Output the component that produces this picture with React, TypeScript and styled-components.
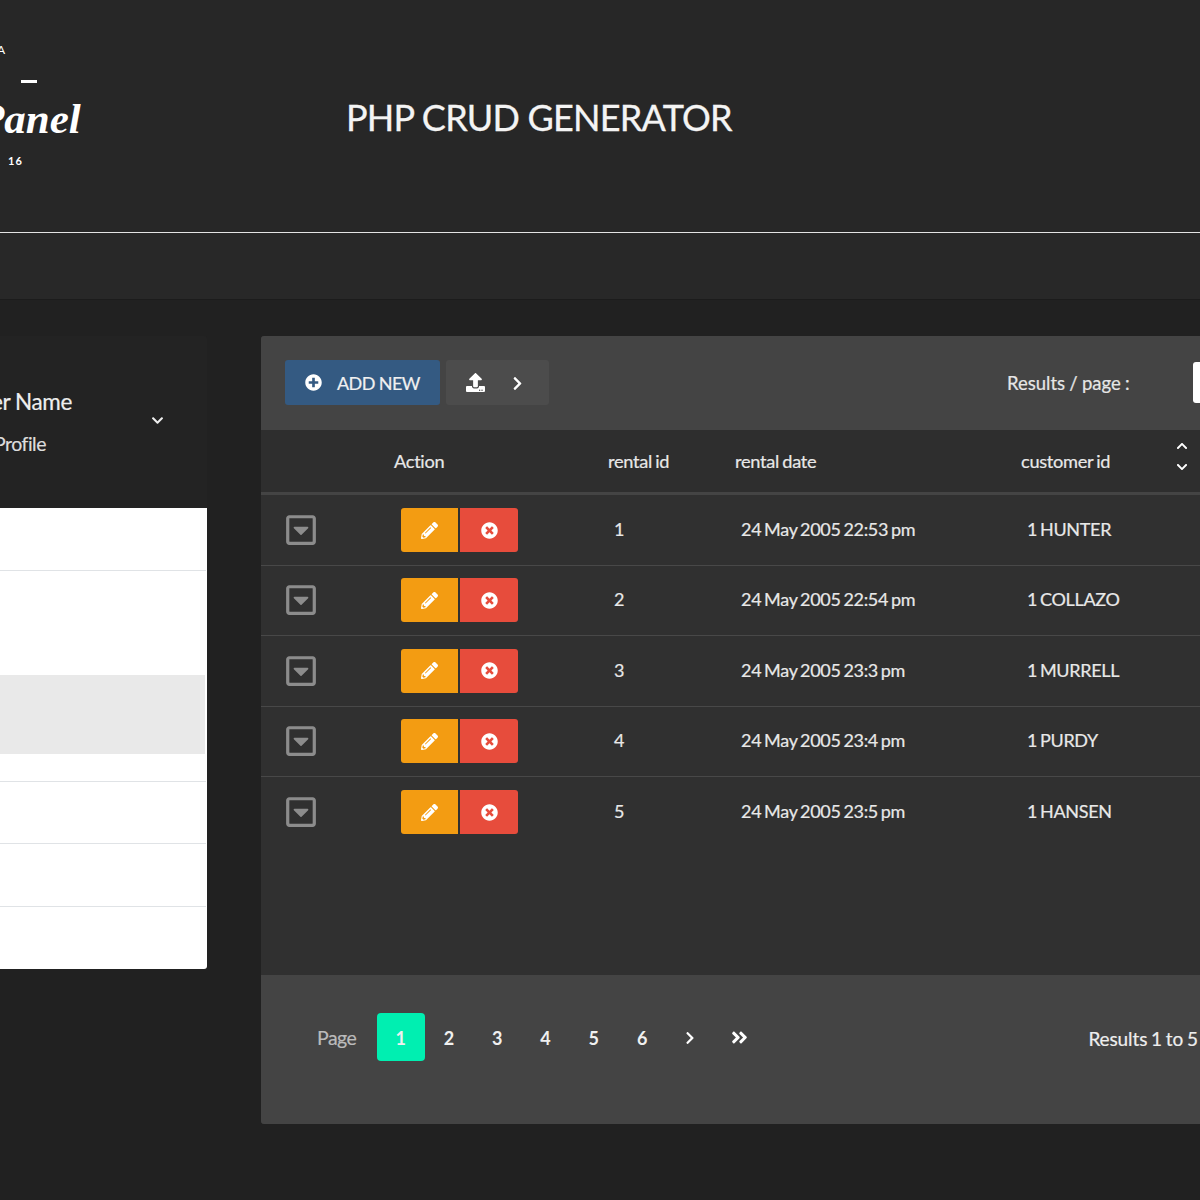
import styled, { createGlobalStyle } from 'styled-components';
import {
  FaAngleDoubleRight,
  FaChevronDown,
  FaChevronRight,
  FaChevronUp,
  FaPencilAlt,
  FaPlusCircle,
  FaRegCaretSquareDown,
  FaTimesCircle,
  FaUpload,
} from 'react-icons/fa';

const GlobalStyle = createGlobalStyle`
  html, body {
    margin: 0;
    padding: 0;
    background: #212121;
  }
  body {
    font-family: Lato, "Open Sans", sans-serif;
    color: #eee;
  }
`;

const Page = styled.div`
  width: 1200px;
  height: 1200px;
  overflow: hidden;
  background: #212121;
`;

const Header = styled.header`
  height: 232px;
  background: #272727;
  border-bottom: 1px solid #e4e4e4;
  display: flex;
`;

const Logo = styled.div`
  width: 346px;
  flex-shrink: 0;
  padding-top: 42px;
  box-sizing: border-box;
  overflow: hidden;
  color: #fff;
`;

const LogoTop = styled.div`
  font-size: 12px;
  line-height: 16px;
  margin-left: -3px;
`;

const LogoDash = styled.div`
  width: 16px;
  height: 3px;
  margin: 22px 0 0 21px;
  background: #fff;
`;

const LogoScript = styled.div`
  font-family: "Liberation Serif", serif;
  font-style: italic;
  font-weight: 700;
  font-size: 43px;
  line-height: 50px;
  margin: 11px 0 0 -22px;
`;

const LogoYear = styled.div`
  font-size: 11px;
  font-weight: 700;
  line-height: 14px;
  margin: 10px 0 0 8px;
  letter-spacing: 1px;
`;

const Title = styled.h1`
  margin: 95px 0 0;
  font-size: 36px;
  line-height: 44px;
  height: 44px;
  font-weight: 400;
  letter-spacing: -0.77px;
  color: #f4f4f4;
  white-space: nowrap;
  -webkit-text-stroke: 0.3px #f4f4f4;
`;

const NavBar = styled.nav`
  height: 66px;
  background: #282828;
  border-bottom: 1px solid #1c1c1c;
`;

const Body = styled.div`
  display: flex;
  align-items: flex-start;
  gap: 54px;
  padding-top: 36px;
`;

const Sidebar = styled.aside`
  width: 207px;
  flex-shrink: 0;
  overflow: hidden;
  border-radius: 0 3px 3px 0;
`;

const UserBox = styled.div`
  height: 172px;
  background: #232323;
  position: relative;
  overflow: hidden;
  box-sizing: border-box;
  padding-top: 52px;
`;

const UserName = styled.div`
  font-size: 22.5px;
  line-height: 28px;
  letter-spacing: -0.4px;
  color: #eee;
  margin-left: -34px;
  white-space: nowrap;
  -webkit-text-stroke: 0.2px #eee;
`;

const UserProfile = styled.div`
  font-size: 19.5px;
  line-height: 24px;
  letter-spacing: -0.5px;
  color: #ddd;
  margin: 16px 0 0 -6px;
  white-space: nowrap;
  -webkit-text-stroke: 0.2px #ddd;
`;

const UserCaret = styled.span`
  position: absolute;
  left: 151px;
  top: 78px;
  font-size: 13px;
  line-height: 13px;
  color: #eee;
`;

const Menu = styled.ul`
  list-style: none;
  margin: 0;
  padding: 0;
  background: #fff;
  height: 461px;
  box-sizing: border-box;
  padding-right: 1px;
`;

const MenuItem = styled.li<{ $height: number }>`
  height: ${props => props.$height}px;
  box-sizing: border-box;
  border-bottom: 1px solid #e0e3e6;
  padding-top: ${props => (props.$height > 100 ? 104 : 0)}px;

  &:last-child {
    border-bottom: none;
  }
`;

const ActiveItem = styled.div`
  height: 79px;
  margin-right: 1px;
  background: #e9e9e9;
`;

const Panel = styled.section`
  width: 1100px;
  flex-shrink: 0;
  border-radius: 3px;
  overflow: hidden;
  background: #303030;
`;

const Toolbar = styled.div`
  height: 94px;
  background: #444;
  display: flex;
  align-items: center;
  padding: 0 24px;
  box-sizing: border-box;
`;

const AddButton = styled.button`
  width: 155px;
  height: 45px;
  border: none;
  border-radius: 3px;
  background: #345a82;
  color: #f0f0f0;
  font: 400 18px Lato, sans-serif;
  letter-spacing: -0.6px;
  -webkit-text-stroke: 0.2px #f0f0f0;
  display: flex;
  align-items: center;
  gap: 15px;
  padding: 0 0 0 20px;
  margin-top: -1px;

  svg {
    font-size: 17px;
    color: #fff;
  }
`;

const ExportButton = styled.button`
  width: 103px;
  height: 45px;
  margin: -1px 0 0 6px;
  border: none;
  border-radius: 3px;
  background: #4c4c4c;
  color: #fff;
  display: flex;
  align-items: center;
  gap: 25px;
  padding: 0 0 0 20px;

  svg:first-child {
    font-size: 19px;
  }
  svg:last-child {
    font-size: 15px;
    margin-top: 1px;
  }
`;

const PerPage = styled.div`
  margin-left: 458px;
  font-size: 18.5px;
  word-spacing: -0.5px;
  color: #e6e6e6;
  white-space: nowrap;
  -webkit-text-stroke: 0.2px #e6e6e6;
`;

const PerPageSelect = styled.div`
  width: 80px;
  height: 41px;
  margin: -2px 0 0 63px;
  border-radius: 3px;
  background: #fff;
`;

const rowColumns = '125px 214px 127px 286px 1fr';

const HeadRow = styled.div`
  height: 65.4px;
  display: grid;
  grid-template-columns: ${rowColumns};
  align-items: center;
  background: #2e2e2e;
  border-bottom: 3px solid #444;
  box-sizing: border-box;
`;

const HeadCell = styled.div`
  padding: 0 0 1px 8px;
  font-size: 18.2px;
  letter-spacing: -0.3px;
  word-spacing: -1px;
  color: #e8e8e8;
  white-space: nowrap;
  position: relative;
  -webkit-text-stroke: 0.2px #e8e8e8;
`;

const SortIcons = styled.span`
  position: absolute;
  left: 163px;
  top: -10px;
  display: flex;
  flex-direction: column;
  gap: 9px;
  font-size: 12px;
  line-height: 12px;
  color: #fff;
  -webkit-text-stroke: 0;
`;

const Rows = styled.div`
  height: 479.6px;
`;

const Row = styled.div`
  height: 70.4px;
  display: grid;
  grid-template-columns: ${rowColumns};
  align-items: center;
  border-bottom: 1px solid #484848;
  box-sizing: border-box;
  font-size: 18px;
  letter-spacing: -0.3px;
  word-spacing: -1.5px;
  color: #e8e8e8;

  &:last-child {
    border-bottom: none;
  }
`;

const ExpandCell = styled.div`
  padding-left: 23px;
  font-size: 34px;
  line-height: 0;
  color: #8c8c8c;
  display: flex;
`;

const ActionCell = styled.div`
  padding-left: 15px;
  display: flex;
  gap: 2px;
`;

const RowButton = styled.button<{ $color: string; $width: number }>`
  width: ${props => props.$width}px;
  height: 44px;
  border: none;
  padding: 0;
  background: ${props => props.$color};
  color: #fff;
  font-size: 17px;
  display: flex;
  align-items: center;
  justify-content: center;

  &:first-child {
    border-radius: 3px 0 0 3px;
  }
  &:last-child {
    border-radius: 0 3px 3px 0;
  }
`;

const DataCell = styled.div`
  padding: 0 0 2px 14px;
  white-space: nowrap;
  -webkit-text-stroke: 0.2px #e8e8e8;
`;

const Footer = styled.div`
  height: 149px;
  background: #444;
  box-sizing: border-box;
  padding: 38px 0 0 56px;
  display: flex;
  align-items: flex-start;
`;

const PageLabel = styled.span`
  width: 60px;
  line-height: 50px;
  font-size: 19.5px;
  letter-spacing: -0.5px;
  color: #bbb;
  -webkit-text-stroke: 0.2px #bbb;
`;

const PageLink = styled.a<{ $active?: boolean }>`
  width: 48.3px;
  height: 48px;
  border-radius: 4px;
  display: flex;
  align-items: center;
  justify-content: center;
  padding: 2px 1px 0 0;
  box-sizing: border-box;
  font-size: 18px;
  font-weight: 700;
  color: #f0f0f0;
  background: ${props => (props.$active ? '#00efb1' : 'transparent')};
`;

const PageArrow = styled(PageLink)`
  font-size: 14px;
  color: #fff;
`;

const PageLast = styled(PageLink)`
  font-size: 19px;
  margin-left: 1px;
  color: #fff;
`;

const ResultsText = styled.span`
  margin-left: 324px;
  line-height: 52px;
  font-size: 19px;
  letter-spacing: -0.1px;
  word-spacing: -1px;
  color: #eee;
  white-space: nowrap;
  -webkit-text-stroke: 0.2px #eee;
`;

const rentals = [
  { id: 1, date: '24 May 2005 22:53 pm', customer: '1 HUNTER' },
  { id: 2, date: '24 May 2005 22:54 pm', customer: '1 COLLAZO' },
  { id: 3, date: '24 May 2005 23:3 pm', customer: '1 MURRELL' },
  { id: 4, date: '24 May 2005 23:4 pm', customer: '1 PURDY' },
  { id: 5, date: '24 May 2005 23:5 pm', customer: '1 HANSEN' },
];

const menuHeights = [63, 211, 62, 63, 62];

const App = () => {
  return (
    <Page>
      <GlobalStyle />
      <Header>
        <Logo>
          <LogoTop>A</LogoTop>
          <LogoDash />
          <LogoScript>Panel</LogoScript>
          <LogoYear>16</LogoYear>
        </Logo>
        <Title>PHP CRUD GENERATOR</Title>
      </Header>
      <NavBar />
      <Body>
        <Sidebar>
          <UserBox>
            <UserName>User Name</UserName>
            <UserProfile>Profile</UserProfile>
            <UserCaret>
              <FaChevronDown />
            </UserCaret>
          </UserBox>
          <Menu>
            {menuHeights.map((height, i) => (
              <MenuItem key={i} $height={height}>
                {height > 100 && <ActiveItem />}
              </MenuItem>
            ))}
          </Menu>
        </Sidebar>
        <Panel>
          <Toolbar>
            <AddButton>
              <FaPlusCircle />
              ADD NEW
            </AddButton>
            <ExportButton>
              <FaUpload />
              <FaChevronRight />
            </ExportButton>
            <PerPage>Results / page :</PerPage>
            <PerPageSelect />
          </Toolbar>
          <HeadRow>
            <div />
            <HeadCell>Action</HeadCell>
            <HeadCell>rental id</HeadCell>
            <HeadCell>rental date</HeadCell>
            <HeadCell>
              customer id
              <SortIcons>
                <FaChevronUp />
                <FaChevronDown />
              </SortIcons>
            </HeadCell>
          </HeadRow>
          <Rows>
            {rentals.map(rental => (
              <Row key={rental.id}>
                <ExpandCell>
                  <FaRegCaretSquareDown />
                </ExpandCell>
                <ActionCell>
                  <RowButton $color="#f39c12" $width={57}>
                    <FaPencilAlt />
                  </RowButton>
                  <RowButton $color="#e74c3c" $width={58}>
                    <FaTimesCircle />
                  </RowButton>
                </ActionCell>
                <DataCell>{rental.id}</DataCell>
                <DataCell>{rental.date}</DataCell>
                <DataCell>{rental.customer}</DataCell>
              </Row>
            ))}
          </Rows>
          <Footer>
            <PageLabel>Page</PageLabel>
            <PageLink $active>1</PageLink>
            <PageLink>2</PageLink>
            <PageLink>3</PageLink>
            <PageLink>4</PageLink>
            <PageLink>5</PageLink>
            <PageLink>6</PageLink>
            <PageArrow>
              <FaChevronRight />
            </PageArrow>
            <PageLast>
              <FaAngleDoubleRight />
            </PageLast>
            <ResultsText>Results 1 to 5 of 30</ResultsText>
          </Footer>
        </Panel>
      </Body>
    </Page>
  );
};

export default App;
